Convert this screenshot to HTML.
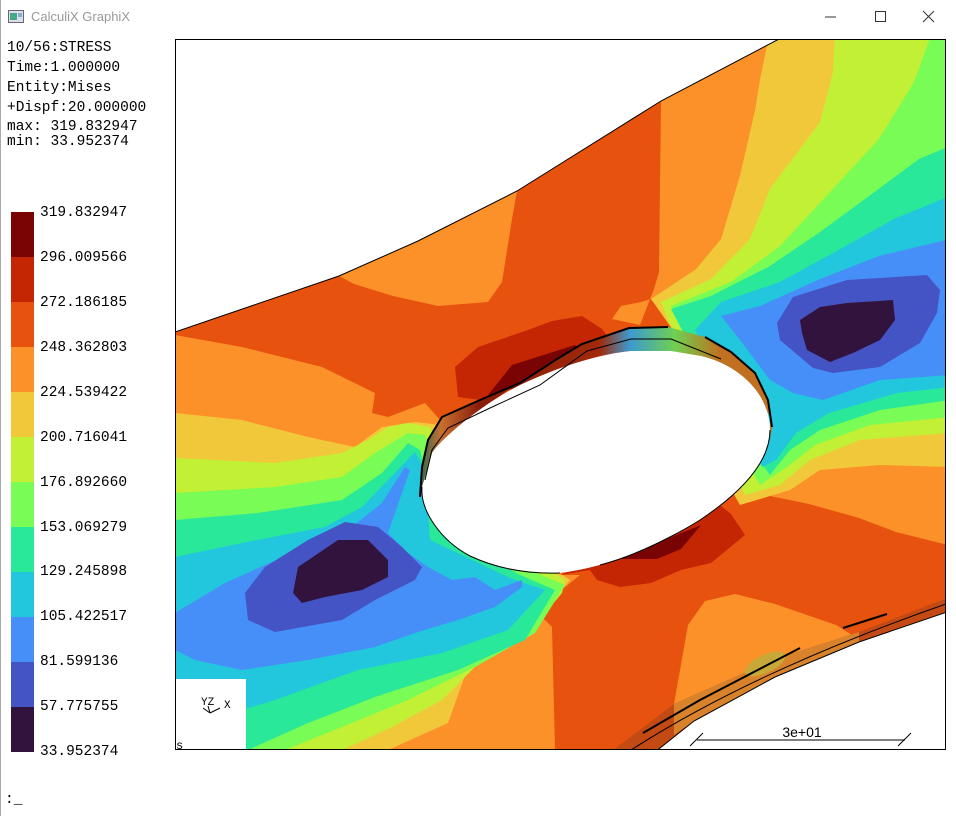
<!DOCTYPE html>
<html><head><meta charset="utf-8"><style>
body{margin:0;width:956px;height:816px;background:#fff;overflow:hidden;position:relative;font-family:"Liberation Mono",monospace;}
.t{position:absolute;font-size:14.5px;color:#000;white-space:pre;line-height:16px}
.tb{position:absolute;left:31px;top:9px;font-family:"Liberation Sans",sans-serif;font-size:13px;color:#999}
</style></head><body>
<div style="position:absolute;left:0;top:0;width:1px;height:816px;background:#aaa"></div>
<svg style="position:absolute;left:8px;top:10px" width="16" height="13"><rect x="0.5" y="0.5" width="15" height="12" fill="#dde" stroke="#667"/><rect x="2" y="3" width="7" height="7" fill="#4a8"/><rect x="10" y="3" width="4" height="4" fill="#8ac"/></svg>
<div class="tb">CalculiX GraphiX</div>
<svg style="position:absolute;left:820px;top:6px" width="130" height="22"><line x1="5" y1="11" x2="16" y2="11" stroke="#333"/><rect x="55.5" y="5.5" width="10" height="10" fill="none" stroke="#333"/><path d="M103 5 L114 16 M114 5 L103 16" stroke="#333"/></svg>
<div class="t" style="left:7px;top:40px">10/56:STRESS</div>
<div class="t" style="left:7px;top:60px">Time:1.000000</div>
<div class="t" style="left:7px;top:80px">Entity:Mises</div>
<div class="t" style="left:7px;top:100px">+Dispf:20.000000</div>
<div class="t" style="left:7px;top:119px">max: 319.832947</div>
<div class="t" style="left:7px;top:134px">min: 33.952374</div>
<div class="t" style="left:40px;top:205px">319.832947</div>
<div class="t" style="left:40px;top:250px">296.009566</div>
<div class="t" style="left:40px;top:295px">272.186185</div>
<div class="t" style="left:40px;top:340px">248.362803</div>
<div class="t" style="left:40px;top:385px">224.539422</div>
<div class="t" style="left:40px;top:430px">200.716041</div>
<div class="t" style="left:40px;top:475px">176.892660</div>
<div class="t" style="left:40px;top:520px">153.069279</div>
<div class="t" style="left:40px;top:564px">129.245898</div>
<div class="t" style="left:40px;top:609px">105.422517</div>
<div class="t" style="left:40px;top:654px">81.599136</div>
<div class="t" style="left:40px;top:699px">57.775755</div>
<div class="t" style="left:40px;top:744px">33.952374</div>
<div class="t" style="left:5px;top:792px">:_</div>
<svg style="position:absolute;left:0;top:0" width="956" height="816">
<g>
<rect x="11" y="212" width="23" height="45" fill="#7a0403"/>
<rect x="11" y="257" width="23" height="45" fill="#c42503"/>
<rect x="11" y="302" width="23" height="45" fill="#e8520f"/>
<rect x="11" y="347" width="23" height="45" fill="#fb9128"/>
<rect x="11" y="392" width="23" height="45" fill="#f2c83b"/>
<rect x="11" y="437" width="23" height="45" fill="#c2f034"/>
<rect x="11" y="482" width="23" height="45" fill="#79fc55"/>
<rect x="11" y="527" width="23" height="45" fill="#2ae89a"/>
<rect x="11" y="572" width="23" height="45" fill="#22c6dd"/>
<rect x="11" y="617" width="23" height="45" fill="#468ff8"/>
<rect x="11" y="662" width="23" height="45" fill="#4454c4"/>
<rect x="11" y="707" width="23" height="45" fill="#32133d"/>
</g>
<clipPath id="pc"><rect x="175" y="39" width="771" height="711"/></clipPath>
<g clip-path="url(#pc)">
<rect x="175" y="39" width="771" height="711" fill="#e8520f"/>
<polygon fill="#fb9128" points="339,276 418,241 517,191 512,219 502,282 488,302 438,306 393,296 354,284"/>
<polygon fill="#fb9128" points="175,335 242,347 322,367 375,393 372,413 388,417 425,403 440,420 460,470 175,470"/>
<polygon fill="#fb9128" points="661,101 720,70 790,30 768,35 767,45 760,79 755,110 740,175 721,239 696,269 651,299 641,302 621,306 612,319 640,325 654,289 659,272"/>
<polygon fill="#fb9128" points="741,490 809,504 859,518 896,532 948,545 948,455 760,455"/>
<polygon fill="#fb9128" points="674,704 688,625 705,601 735,594 775,604 836,625 860,640 870,660 700,720"/>
<polygon fill="#fb9128" points="560,575 580,575 558,593 535,610 552,627 555,750 380,750 440,700 500,620"/>
<polygon fill="#f2c83b" points="768,35 950,35 950,467 880,465 820,470 790,490 740,505 720,470 680,340 651,299 696,269 721,239 740,175 755,110 760,79 767,45"/>
<polygon fill="#c2f034" points="835,35 950,35 950,433 860,440 810,460 780,485 745,495 700,400 661,302 711,279 750,239 770,189 820,122 833,72"/>
<polygon fill="#79fc55" points="931,35 950,35 950,417 870,425 815,445 790,465 760,485 720,420 671,306 731,282 780,246 830,192 879,139 914,82"/>
<polygon fill="#2ae89a" points="950,146 950,400 880,410 820,430 790,450 770,475 730,420 671,309 711,296 770,266 820,232 869,196 919,159"/>
<polygon fill="#22c6dd" points="950,196 950,387 897,393 829,413 796,433 776,460 762,467 740,420 695,330 721,302 780,282 835,252 894,219"/>
<polygon fill="#468ff8" points="950,239 950,375 880,380 823,400 793,393 770,380 740,340 721,316 760,306 820,279 879,256"/>
<polygon fill="#4454c4" points="777,323 793,297 847,280 927,275 940,290 937,313 920,343 880,367 833,373 813,368 780,340"/>
<polygon fill="#32133d" points="800,320 820,307 847,303 893,300 895,320 880,340 853,353 830,362 807,350 802,333"/>
<polygon fill="#f2c83b" points="175,413 242,420 308,437 355,447 382,427 415,422 440,425 470,480 540,560 570,580 548,607 508,637 468,667 448,723 388,750 175,750"/>
<polygon fill="#c2f034" points="175,458 275,463 342,453 368,440 388,427 408,423 430,427 460,500 540,565 565,580 562,593 542,617 492,650 442,700 392,727 342,750 175,750"/>
<polygon fill="#79fc55" points="175,493 275,487 342,477 375,453 408,433 425,435 450,510 530,570 565,585 535,633 475,667 408,700 342,727 285,750 175,750"/>
<polygon fill="#2ae89a" points="175,520 258,513 342,500 382,473 408,443 420,450 440,530 520,575 555,590 525,640 458,670 375,697 308,723 248,750 175,750"/>
<polygon fill="#22c6dd" points="175,557 242,543 325,527 362,507 388,480 415,452 425,470 430,540 510,578 545,590 508,630 442,653 358,670 275,700 242,710 175,690"/>
<polygon fill="#468ff8" points="175,613 225,583 292,553 348,530 382,503 405,467 410,470 388,533 408,553 428,567 452,580 475,577 495,590 522,580 522,587 495,607 458,620 415,633 375,647 308,660 242,670 195,660 175,650"/>
<polygon fill="#4454c4" points="245,593 265,567 308,540 345,522 378,527 402,547 422,567 415,580 375,600 342,620 275,632 248,620"/>
<polygon fill="#32133d" points="298,567 338,540 368,540 388,560 388,577 362,590 325,597 302,603 293,593"/>
<polygon fill="#c42503" points="455,367 478,347 528,330 552,321 582,316 602,329 612,342 600,345 520,380 480,400 458,397"/>
<polygon fill="#7a0403" points="488,395 512,365 575,345 585,352 520,387"/>
<polygon fill="#c42503" points="560,575 590,570 597,580 620,587 651,583 681,570 711,563 745,535 731,514 721,506 700,520"/>
<polygon fill="#7a0403" points="620,559 657,559 681,549 701,525 640,550"/>
<polygon fill="#c44a14" points="600,760 674,704 775,659 859,632 950,597 950,613 859,642 775,677 694,721 645,760"/>
<polygon fill="#d8822c" points="674,704 775,659 859,632 859,642 775,677 694,721 674,735"/>
<ellipse cx="765" cy="664" rx="22" ry="9" fill="#c8a838" transform="rotate(-25 765 664)"/>
<polygon fill="#fff" points="645,760 694,721 775,677 859,642 950,611 950,760"/>
<path d="M628,752 C700,705 800,655 946,604" fill="none" stroke="#000" stroke-width="1"/>
<path d="M643,733 L700,700 L800,648" fill="none" stroke="#000" stroke-width="2"/>
<path d="M843,628 L887,614" fill="none" stroke="#000" stroke-width="2"/>
<path d="M645,760 L694,721 L775,677 L859,642 L950,611" fill="none" stroke="#000" stroke-width="1"/>
<defs><linearGradient id="sg" x1="420" y1="0" x2="720" y2="0" gradientUnits="userSpaceOnUse">
<stop offset="0" stop-color="#2a6a50"/><stop offset="0.07" stop-color="#c87030"/><stop offset="0.2" stop-color="#8a1a08"/><stop offset="0.6" stop-color="#a02a0a"/><stop offset="0.7" stop-color="#3c9ad0"/><stop offset="0.85" stop-color="#70d050"/><stop offset="1" stop-color="#c07020"/></linearGradient></defs>
<polygon fill="url(#sg)" points="420,497 422,467 428,440 442,417 480,400 520,383 557,359 582,344 629,328 668,327 705,337 731,352 755,373 768,400 772,427 770,440 770,417 758,393 735,373 701,358 671,351 631,351 600,356 560,368 508,390 458,427 432,453"/>
<path fill="#fff" d="M422,487 C420,510 440,540 470,556 C500,570 530,574 560,573 C600,568 650,552 700,520 C745,490 770,460 770,430 C770,395 740,365 701,356 L671,351 L631,351 C600,354 560,366 520,385 C480,405 440,440 432,453 Z"/>
<path d="M420,497 L422,467 L428,440 L442,417 L480,400 L520,383 L557,359 L582,344 L629,328 L668,327" fill="none" stroke="#000" stroke-width="2"/>
<path d="M425,480 L432,450 L448,428 L490,408 L540,385 L587,351 L631,339 L671,339 L721,359" fill="none" stroke="#000" stroke-width="1"/>
<path d="M705,337 L731,352 L755,373 L768,400 L772,427" fill="none" stroke="#000" stroke-width="2"/>
<path d="M422,487 C420,510 440,540 470,556 C500,570 530,574 560,573 M600,565 C650,552 700,520 700,520 C745,490 770,460 770,430" fill="none" stroke="#000" stroke-width="1"/>
<path d="M175,332 L339,276 L418,241 L517,191 L661,101 L779,39 L779,30 L170,30 L170,332 Z" fill="#fff"/>
<path d="M175,332 L339,276 L418,241 L517,191 L661,101 L779,39" fill="none" stroke="#000" stroke-width="1"/>
<rect x="175" y="679" width="71" height="71" fill="#fff"/>
<text x="176" y="749" font-family="Liberation Mono,monospace" font-size="12">s</text>
<path d="M210,713 L203,708 M210,713 L208,706 M210,713 L220,708" stroke="#000" fill="none"/>
<text x="201" y="705" font-family="Liberation Mono,monospace" font-size="11">YZ</text>
<text x="224" y="708" font-family="Liberation Mono,monospace" font-size="11">X</text>
<line x1="697" y1="740" x2="905" y2="740" stroke="#000"/>
<line x1="690" y1="746" x2="703" y2="733" stroke="#000"/>
<line x1="898" y1="746" x2="911" y2="733" stroke="#000"/>
<text x="802" y="737" text-anchor="middle" font-family="Liberation Sans,sans-serif" font-size="14">3e+01</text>
</g>
<rect x="175.5" y="39.5" width="770" height="710" fill="none" stroke="#000"/>
</svg>
</body></html>
